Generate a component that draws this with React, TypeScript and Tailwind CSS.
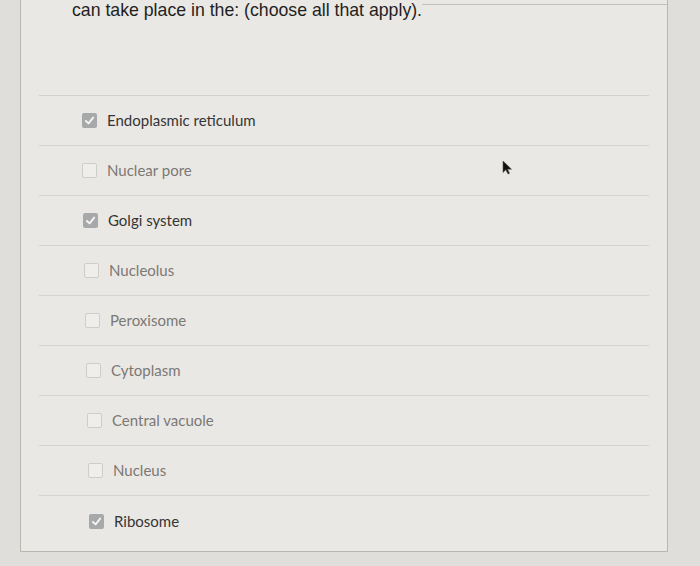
import React from 'react';

type Choice = { label: string; checked: boolean; indent: string };

const choices: Choice[] = [
  { label: 'Endoplasmic reticulum', checked: true, indent: 'pl-[43px]' },
  { label: 'Nuclear pore', checked: false, indent: 'pl-[43px]' },
  { label: 'Golgi system', checked: true, indent: 'pl-[44px]' },
  { label: 'Nucleolus', checked: false, indent: 'pl-[45px]' },
  { label: 'Peroxisome', checked: false, indent: 'pl-[46px]' },
  { label: 'Cytoplasm', checked: false, indent: 'pl-[47px]' },
  { label: 'Central vacuole', checked: false, indent: 'pl-[48px]' },
  { label: 'Nucleus', checked: false, indent: 'pl-[49px]' },
  { label: 'Ribosome', checked: true, indent: 'pl-[50px]' },
];

function Box({ checked }: { checked: boolean }) {
  if (checked) {
    return (
      <span className="flex h-[15px] w-[15px] items-center justify-center rounded-[2px] bg-[#a7a8a9]">
        <svg width="11" height="11" viewBox="0 0 12 12" fill="none">
          <path d="M2 6.5 L5 9.2 L10 2.8" stroke="#f4f4f2" strokeWidth="2" strokeLinecap="round" strokeLinejoin="round" />
        </svg>
      </span>
    );
  }
  return <span className="h-[15px] w-[15px] rounded-[2px] border border-[#cfcdc8] bg-[#efeeea]" />;
}

function Cursor() {
  return (
    <svg className="absolute left-[502px] top-[160px]" width="11" height="15" viewBox="0 0 11 15">
      <path d="M1 1 L1 12.5 L3.8 9.8 L6 14 L7.6 13.2 L5.5 9.2 L9.5 9.2 Z" fill="#111" stroke="#555" strokeWidth="0.6" />
    </svg>
  );
}

export default function App() {
  return (
    <div className="relative h-[566px] w-[700px] overflow-hidden bg-[#e0deda]">
      <div className="ml-[20px] flex h-[552px] w-[648px] flex-col border-r border-b border-l border-[#b9b7b2] bg-[#eae8e4]">
        {/* Question text, cut off at the top */}
        <div className="flex h-[95px] items-start">
          <p className="pl-[51px] text-[17.7px] leading-[20px] text-[#1f1f1f] [font-family:'Liberation_Sans',Arial,sans-serif]">
            can take place in the: (choose all that apply).
          </p>
          <div className="mt-[4px] flex-1 border-t border-[#c3c1bc]" />
        </div>

        <ul className="ml-[18px] mr-[18px] border-t border-[#d3d1cc] [font-family:Lato,sans-serif]">
          {choices.map((c, i) => (
            <li
              key={c.label}
              className={`flex h-[50px] items-center gap-[10px] ${i < choices.length - 1 ? 'border-b border-[#d6d4cf]' : ''} ${c.indent}`}
            >
              <Box checked={c.checked} />
              <span className={`text-[15px] ${c.checked ? 'text-[#353535]' : 'text-[#7a7976]'}`}>{c.label}</span>
            </li>
          ))}
        </ul>
      </div>
      <Cursor />
    </div>
  );
}
